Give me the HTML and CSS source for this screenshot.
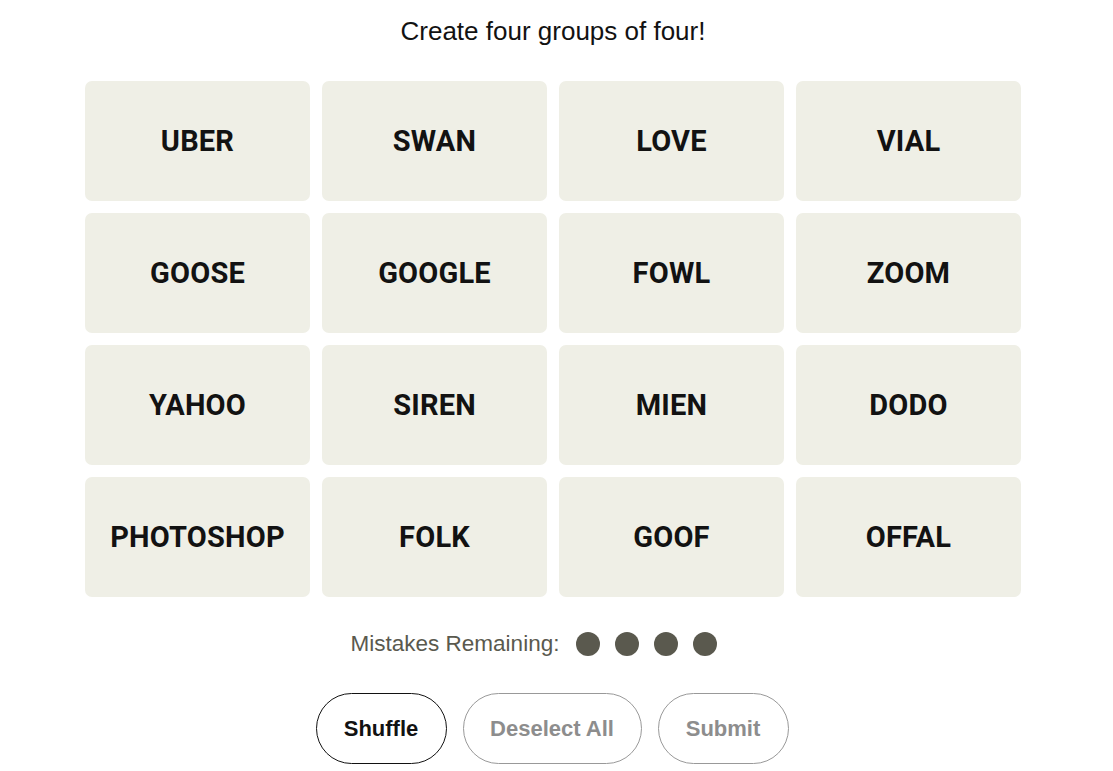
FILE: index.html
```html
<!DOCTYPE html>
<html lang="en">
<head>
    <meta charset="UTF-8">
    <meta name="viewport" content="width=device-width, initial-scale=1.0">
    <title>Connections</title>
    <link rel="stylesheet" href="styles.css">
</head>
<body>
    <main class="game">
        <p class="prompt">Create four groups of four!</p>

        <div class="board">
            <button class="tile">UBER</button>
            <button class="tile">SWAN</button>
            <button class="tile">LOVE</button>
            <button class="tile">VIAL</button>
            <button class="tile">GOOSE</button>
            <button class="tile">GOOGLE</button>
            <button class="tile">FOWL</button>
            <button class="tile">ZOOM</button>
            <button class="tile">YAHOO</button>
            <button class="tile">SIREN</button>
            <button class="tile">MIEN</button>
            <button class="tile">DODO</button>
            <button class="tile">PHOTOSHOP</button>
            <button class="tile">FOLK</button>
            <button class="tile">GOOF</button>
            <button class="tile">OFFAL</button>
        </div>

        <div class="mistakes">
            <span>Mistakes Remaining:</span>
            <span class="dots">
                <span class="dot"></span>
                <span class="dot"></span>
                <span class="dot"></span>
                <span class="dot"></span>
            </span>
        </div>

        <div class="controls">
            <button class="pill pill-active shuffle">Shuffle</button>
            <button class="pill deselect" disabled>Deselect All</button>
            <button class="pill submit" disabled>Submit</button>
        </div>
    </main>
</body>
</html>
```

FILE: styles.css
```css
body {
    margin: 0;
    background: #fff;
    color: #121212;
    font-family: "Liberation Sans", Arial, sans-serif;
}

.game {
    width: 936px;
    margin-left: 85px;
    display: flex;
    flex-direction: column;
    align-items: center;
}

.prompt {
    margin: 16px 0 0;
    font-size: 26px;
    line-height: 30px;
    letter-spacing: 0;
}

.board {
    margin-top: 35px;
    display: grid;
    grid-template-columns: repeat(4, 225px);
    grid-auto-rows: 120px;
    gap: 12px;
}

.tile {
    border: none;
    border-radius: 7px;
    background-color: #efefe6;
    color: #121212;
    font-family: Roboto, "Liberation Sans", sans-serif;
    font-weight: 700;
    font-size: 29px;
    letter-spacing: 0.2px;
    padding: 0;
    cursor: pointer;
}

/* the row sits a little left of centre */
.mistakes {
    margin: 34px 38px 0 0;
    display: flex;
    align-items: center;
    gap: 17px;
    font-size: 22.5px;
    line-height: 26px;
    color: #5a594e;
}

.dots {
    display: flex;
    gap: 15px;
}

.dot {
    width: 24px;
    height: 24px;
    border-radius: 50%;
    background-color: #5a594e;
}

.controls {
    margin-top: 36px;
    display: flex;
    gap: 16px;
    margin-left: -2px;
}

.pill {
    height: 71px;
    border: 1px solid #999;
    border-radius: 36px;
    background: #fff;
    color: #8d8d8d;
    font-family: "Liberation Sans", Arial, sans-serif;
    font-weight: 700;
    font-size: 22px;
    padding: 0;
    cursor: pointer;
}

.shuffle,
.submit {
    width: 131px;
}

.deselect {
    width: 179px;
}

.pill-active {
    border-color: #121212;
    color: #121212;
}
```
